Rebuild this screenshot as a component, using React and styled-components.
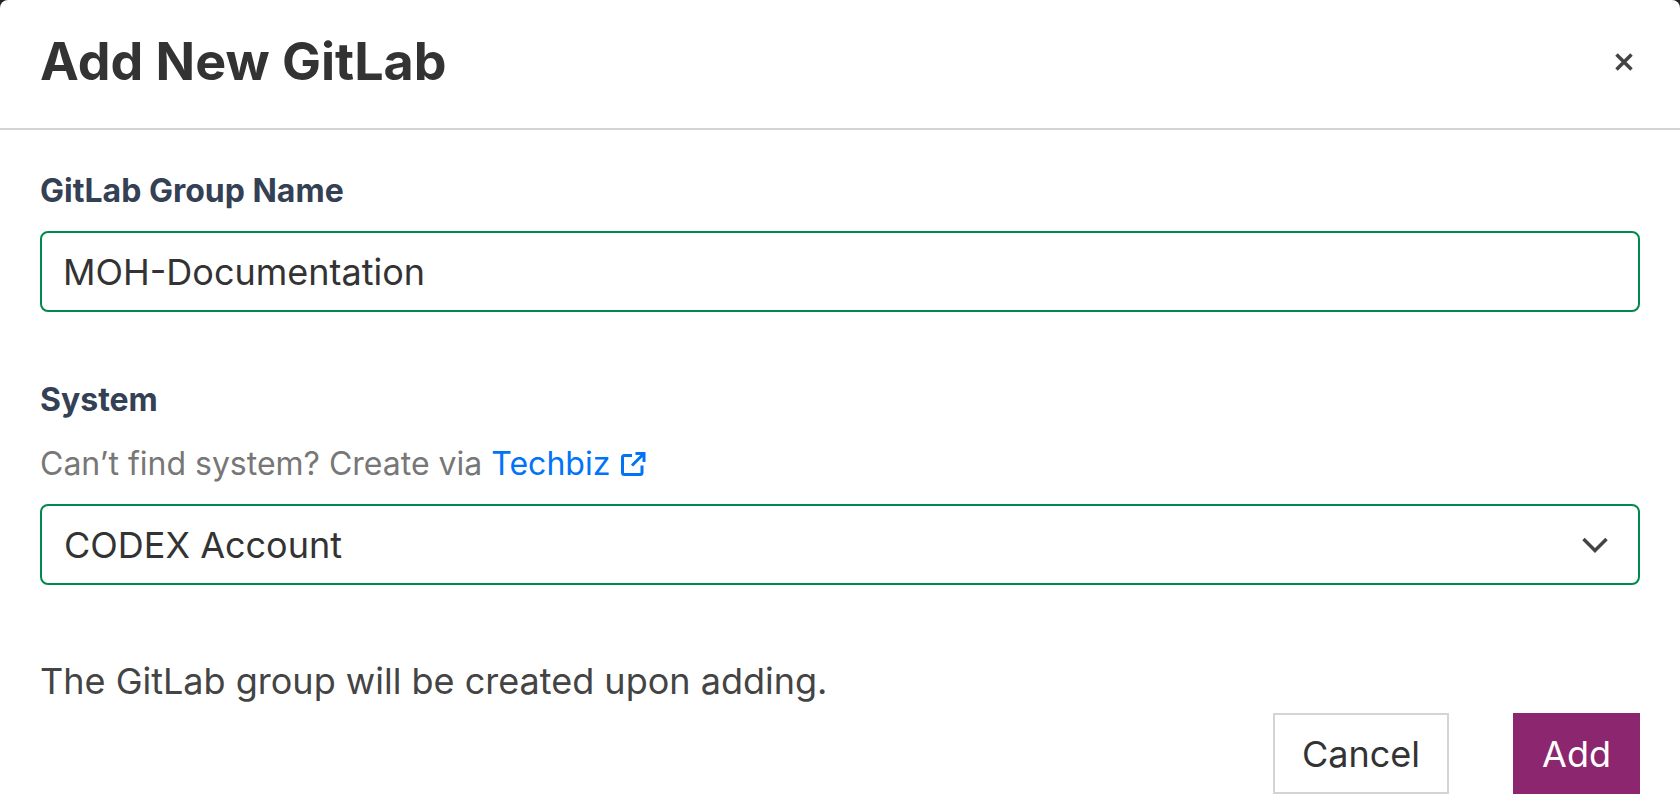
import { useState } from "react";
import styled, { createGlobalStyle } from "styled-components";

const GlobalStyles = createGlobalStyle`
  *,
  *::before,
  *::after {
    box-sizing: border-box;
  }

  body {
    margin: 0;
    background-color: #222222;
    color: #333333;
    font-family: Inter, "Liberation Sans", sans-serif;
    font-size: 36px;
  }

  input,
  button,
  select {
    font: inherit;
    color: inherit;
  }
`;

const Modal = styled.main`
  min-height: 100vh;
  background-color: #ffffff;
  border-radius: 8px 8px 0 0;
`;

const Header = styled.header`
  display: flex;
  align-items: center;
  justify-content: space-between;
  padding: 30px 40px 34px;
  border-bottom: 2px solid #d4d4d4;
`;

const Title = styled.h1`
  margin: 0;
  font-size: 52px;
  line-height: 64px;
  font-weight: 700;
`;

const CloseButton = styled.button`
  display: flex;
  padding: 7px;
  border: none;
  background: none;
  color: #444444;
  cursor: pointer;
`;

const Form = styled.form`
  padding: 41px 40px 8px;
`;

const Field = styled.div`
  display: flex;
  flex-direction: column;
  margin-bottom: ${(props) => (props.$last ? "72px" : "68px")};
`;

const Label = styled.label`
  margin-bottom: ${(props) => (props.$hasHint ? "24px" : "20px")};
  color: #344054;
  font-size: 32px;
  line-height: 40px;
  font-weight: 700;
`;

const Hint = styled.p`
  margin: 0 0 20px;
  color: #777777;
  font-size: 32px;
  line-height: 40px;
`;

const Link = styled.a`
  display: inline-flex;
  align-items: center;
  gap: 10px;
  color: #0073f7;
  text-decoration: none;
`;

const Input = styled.input`
  width: 100%;
  height: 81px;
  padding: 0 21px;
  border: 2px solid #00894a;
  border-radius: 8px;
  background-color: #ffffff;
  outline: none;
`;

const SelectBox = styled.div`
  position: relative;
`;

const Select = styled.select`
  appearance: none;
  width: 100%;
  height: 81px;
  padding: 0 80px 0 22px;
  border: 2px solid #00894a;
  border-radius: 8px;
  background-color: #ffffff;
  outline: none;
`;

/* sits over the select, clicks go through */
const Arrow = styled.span`
  position: absolute;
  top: 0;
  bottom: 0;
  right: 32px;
  display: flex;
  align-items: center;
  color: #444444;
  pointer-events: none;
`;

const Note = styled.p`
  margin: 0 0 8px;
  color: #444444;
  line-height: 48px;
`;

const Actions = styled.div`
  display: flex;
  justify-content: flex-end;
  gap: 64px;
`;

const Button = styled.button`
  height: 81px;
  padding: 0 27px;
  border: 2px solid ${(props) => (props.$primary ? "#8c266e" : "#d4d4d4")};
  background-color: ${(props) => (props.$primary ? "#8c266e" : "#ffffff")};
  color: ${(props) => (props.$primary ? "#ffffff" : "#333333")};
  cursor: pointer;
`;

function CloseIcon() {
  return (
    <svg width="18" height="18" viewBox="0 0 18 18" aria-hidden="true">
      <path
        d="M1.5 1.5l15 15M16.5 1.5l-15 15"
        fill="none"
        stroke="currentColor"
        strokeWidth="3.5"
      />
    </svg>
  );
}

function ExternalIcon() {
  return (
    <svg width="26" height="26" viewBox="0 0 26 26" aria-hidden="true">
      <path
        d="M12 4.5H4.5a2 2 0 0 0-2 2V21.500a2 2 0 0 0 2 2h15.500a2 2 0 0 0 2-2V14.500M15.500 2.500H24V11M24 2.500L12 14.500"
        fill="none"
        stroke="currentColor"
        strokeWidth="3"
      />
    </svg>
  );
}

function ChevronIcon() {
  return (
    <svg width="26" height="16" viewBox="0 0 26 16" aria-hidden="true">
      <path
        d="M1.500 2l11.500 11.500L24.500 2"
        fill="none"
        stroke="currentColor"
        strokeWidth="3.500"
      />
    </svg>
  );
}

function App() {
  const [name, setName] = useState("MOH-Documentation");

  return (
    <>
      <GlobalStyles />
      <Modal>
        <Header>
          <Title>Add New GitLab</Title>
          <CloseButton type="button" aria-label="Close">
            <CloseIcon />
          </CloseButton>
        </Header>
        <Form onSubmit={(e) => e.preventDefault()}>
          <Field>
            <Label htmlFor="groupName">GitLab Group Name</Label>
            <Input
              id="groupName"
              type="text"
              value={name}
              onChange={(e) => setName(e.target.value)}
            />
          </Field>
          <Field $last>
            <Label htmlFor="system" $hasHint>
              System
            </Label>
            <Hint>
              Can’t find system? Create via{" "}
              <Link href="#techbiz">
                Techbiz
                <ExternalIcon />
              </Link>
            </Hint>
            <SelectBox>
              <Select id="system" defaultValue="codex">
                <option value="codex">CODEX Account</option>
              </Select>
              <Arrow>
                <ChevronIcon />
              </Arrow>
            </SelectBox>
          </Field>
          <Note>The GitLab group will be created upon adding.</Note>
          <Actions>
            <Button type="button">Cancel</Button>
            <Button type="submit" $primary>
              Add
            </Button>
          </Actions>
        </Form>
      </Modal>
    </>
  );
}

export default App;
